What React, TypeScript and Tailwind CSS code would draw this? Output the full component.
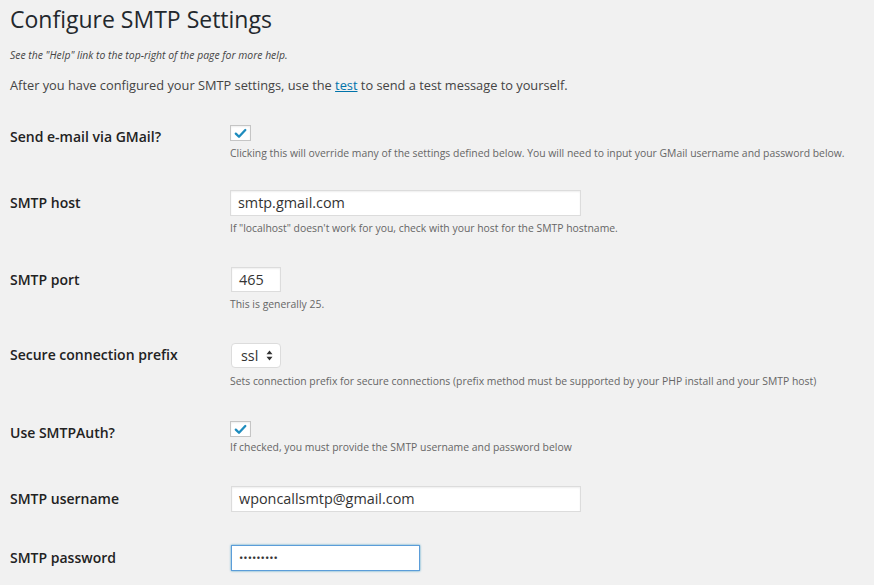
const font = { fontFamily: '"Open Sans", "Noto Sans", sans-serif' };

function Check() {
  return (
    <div className="w-[21px] h-[16px] bg-white border border-[#c5c5c5] shadow-[inset_0_1px_2px_rgba(0,0,0,0.07)] flex items-center justify-center">
      <svg width="13" height="11" viewBox="0 0 13 11">
        <path d="M1.8 5.6 L5 8.8 L11.3 2" fill="none" stroke="#1e8cbe" strokeWidth="2.3" strokeLinecap="round" strokeLinejoin="round" />
      </svg>
    </div>
  );
}

function Desc({ children, mt }: { children: React.ReactNode; mt: string }) {
  return <p className={`text-[10.4px] leading-[14px] text-[#666] ${mt}`}>{children}</p>;
}

function Row({ label, children, mt, pt }: { label: string; children: React.ReactNode; mt: string; pt: string }) {
  return (
    <div className={`flex items-start ${mt}`}>
      <div className={`w-[230px] shrink-0 pl-[10px] ${pt} text-[14px] leading-[18px] font-semibold text-[#222]`}>{label}</div>
      <div className="flex-1">{children}</div>
    </div>
  );
}

function TextInput({ value, w, h, focus, size = 'text-[14.4px]' }: { value: string; w: string; h: string; focus?: boolean; size?: string }) {
  return (
    <div
      className={`${w} ${h} bg-white flex items-center px-[7px] ${size} text-[#333] ${
        focus
          ? 'border border-[#5b9dd9] shadow-[0_0_2px_rgba(30,140,190,0.8)]'
          : 'border border-[#dcdcdc] shadow-[inset_0_1px_2px_rgba(0,0,0,0.07)]'
      }`}
    >
      {value}
    </div>
  );
}

export default function App() {
  return (
    <div style={font} className="w-[874px] h-[585px] bg-[#f1f1f1] overflow-hidden text-[#444]">
      <h2 className="pl-[10px] pt-[4px] text-[23px] leading-[30px] text-[#23282d]">Configure SMTP Settings</h2>
      <p className="pl-[10px] mt-[14px] text-[10.4px] leading-[14px] italic text-[#444]">
        See the "Help" link to the top-right of the page for more help.
      </p>
      <p className="pl-[10px] mt-[14px] text-[12.8px] leading-[18px] text-[#444]">
        After you have configured your SMTP settings, use the{' '}
        <span className="text-[#0073aa] underline">test</span> to send a test message to yourself.
      </p>
      <div className="mt-[31px]">
        <Row label="Send e-mail via GMail?" mt="" pt="pt-[3px]">
          <Check />
          <Desc mt="mt-[5px]">
            Clicking this will override many of the settings defined below. You will need to input your GMail username and password below.
          </Desc>
        </Row>
        <Row label="SMTP host" mt="mt-[30px]" pt="pt-[4px]">
          <TextInput value="smtp.gmail.com" w="w-[351px]" h="h-[26px]" />
          <Desc mt="mt-[5px]">If "localhost" doesn't work for you, check with your host for the SMTP hostname.</Desc>
        </Row>
        <Row label="SMTP port" mt="mt-[32px]" pt="pt-[4px]">
          <TextInput value="465" w="w-[50px] ml-[1px]" h="h-[25px]" />
          <Desc mt="mt-[5px]">This is generally 25.</Desc>
        </Row>
        <Row label="Secure connection prefix" mt="mt-[32px]" pt="pt-[3px]">
          <div className="ml-[1px] w-[50px] h-[25px] bg-white border border-[#dcdcdc] rounded-[4px] flex items-center pl-[9px] gap-[8px] text-[14.4px] text-[#333]">
            <span>ssl</span>
            <svg width="7" height="11" viewBox="0 0 7 11">
              <path d="M3.5 0.5 L6.5 4.3 L0.5 4.3 Z M3.5 10.5 L6.5 6.7 L0.5 6.7 Z" fill="#333" />
            </svg>
          </div>
          <Desc mt="mt-[6px]">Sets connection prefix for secure connections (prefix method must be supported by your PHP install and your SMTP host)</Desc>
        </Row>
        <Row label="Use SMTPAuth?" mt="mt-[33px]" pt="pt-[3px]">
          <Check />
          <Desc mt="mt-[3px]">If checked, you must provide the SMTP username and password below</Desc>
        </Row>
        <Row label="SMTP username" mt="mt-[32px]" pt="pt-[4px]">
          <TextInput value="wponcallsmtp@gmail.com" w="w-[350px] ml-[1px]" h="h-[26px]" />
        </Row>
        <Row label="SMTP password" mt="mt-[33px]" pt="pt-[4px]">
          <TextInput value="•••••••••" w="w-[189px] ml-[1px]" h="h-[26px]" size="text-[11.5px] text-[#222]" focus />
        </Row>
      </div>
    </div>
  );
}
